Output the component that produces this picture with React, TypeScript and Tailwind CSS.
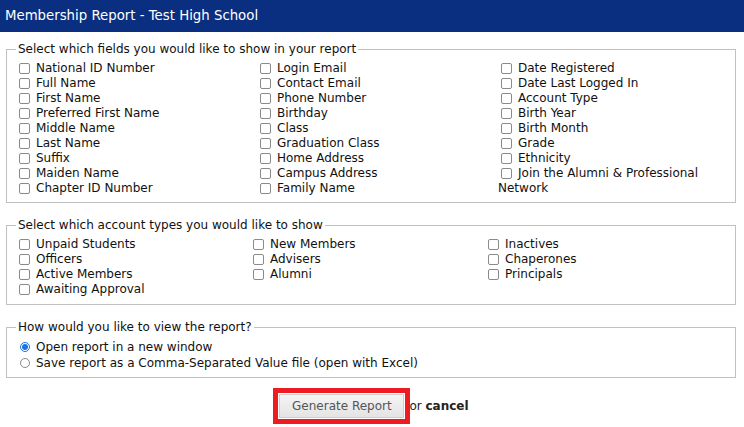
import React from "react";

const fields: string[][] = [
  ["National ID Number", "Full Name", "First Name", "Preferred First Name", "Middle Name", "Last Name", "Suffix", "Maiden Name", "Chapter ID Number"],
  ["Login Email", "Contact Email", "Phone Number", "Birthday", "Class", "Graduation Class", "Home Address", "Campus Address", "Family Name"],
  ["Date Registered", "Date Last Logged In", "Account Type", "Birth Year", "Birth Month", "Grade", "Ethnicity", "Join the Alumni & Professional Network"],
];

const types: string[][] = [
  ["Unpaid Students", "Officers", "Active Members", "Awaiting Approval"],
  ["New Members", "Advisers", "Alumni"],
  ["Inactives", "Chaperones", "Principals"],
];

function Item({ label }: { label: string }) {
  return (
    <div className="leading-[15px]">
      <span className="inline-block align-top mt-[2px] ml-[3px] mr-[6px] w-[11px] h-[11px] border border-[#8a8a8a] rounded-[2px] bg-white" />
      {label}
    </div>
  );
}

function Fieldset({ legend, children, className = "" }: { legend: string; children: React.ReactNode; className?: string }) {
  return (
    <fieldset className={"ml-[6px] mr-[8px] border border-[#c0c0c0] px-[9px] pt-[4px] " + className}>
      <legend className="px-[2px] leading-[15px]">{legend}</legend>
      {children}
    </fieldset>
  );
}

export default function App() {
  return (
    <div className="w-[744px] h-[427px] overflow-hidden bg-white text-[12px] text-[#111] font-['DejaVu_Sans',Verdana,sans-serif]">
      <div className="h-[32px] bg-[#0a2f80] text-white text-[13.3px] leading-[32px] pl-[5px]">
        Membership Report - Test High School
      </div>
      <Fieldset legend="Select which fields you would like to show in your report" className="mt-[10px] pb-[6px]">
        <div className="grid grid-cols-[241px_241px_1fr]">
          {fields.map((col, i) => (
            <div key={i}>
              {col.map((f) => (
                <Item key={f} label={f} />
              ))}
            </div>
          ))}
        </div>
      </Fieldset>
      <Fieldset legend="Select which account types you would like to show" className="mt-[15px] pb-[7px]">
        <div className="grid grid-cols-[234px_235px_1fr]">
          {types.map((col, i) => (
            <div key={i}>
              {col.map((f) => (
                <Item key={f} label={f} />
              ))}
            </div>
          ))}
        </div>
      </Fieldset>
      <Fieldset legend="How would you like to view the report?" className="mt-[15px] pb-[6px]">
        <div className="leading-[16px]">
          <span className="inline-flex items-center justify-center align-top mt-[3px] ml-[4px] mr-[6px] w-[10px] h-[10px] rounded-full border border-[#1a73e8] bg-white">
            <span className="w-[6px] h-[6px] rounded-full bg-[#1a73e8]" />
          </span>
          Open report in a new window
        </div>
        <div className="leading-[16px]">
          <span className="inline-block align-top mt-[3px] ml-[4px] mr-[6px] w-[10px] h-[10px] rounded-full border border-[#8a8a8a] bg-white" />
          Save report as a Comma-Separated Value file (open with Excel)
        </div>
      </Fieldset>
      <div className="flex justify-center items-center mt-[10px] pr-[2px]">
        <div className="border-[5px] border-[#ed1c24] p-[1px]">
          <button className="h-[24px] w-[125px] border border-[#cfcfcf] bg-gradient-to-b from-[#f4f4f4] to-[#e4e4e4] text-[#555] text-[12px] leading-[20px]">
            Generate Report
          </button>
        </div>
        <span className="text-[#222] -ml-px">
          or <b className="font-bold">cancel</b>
        </span>
      </div>
    </div>
  );
}
